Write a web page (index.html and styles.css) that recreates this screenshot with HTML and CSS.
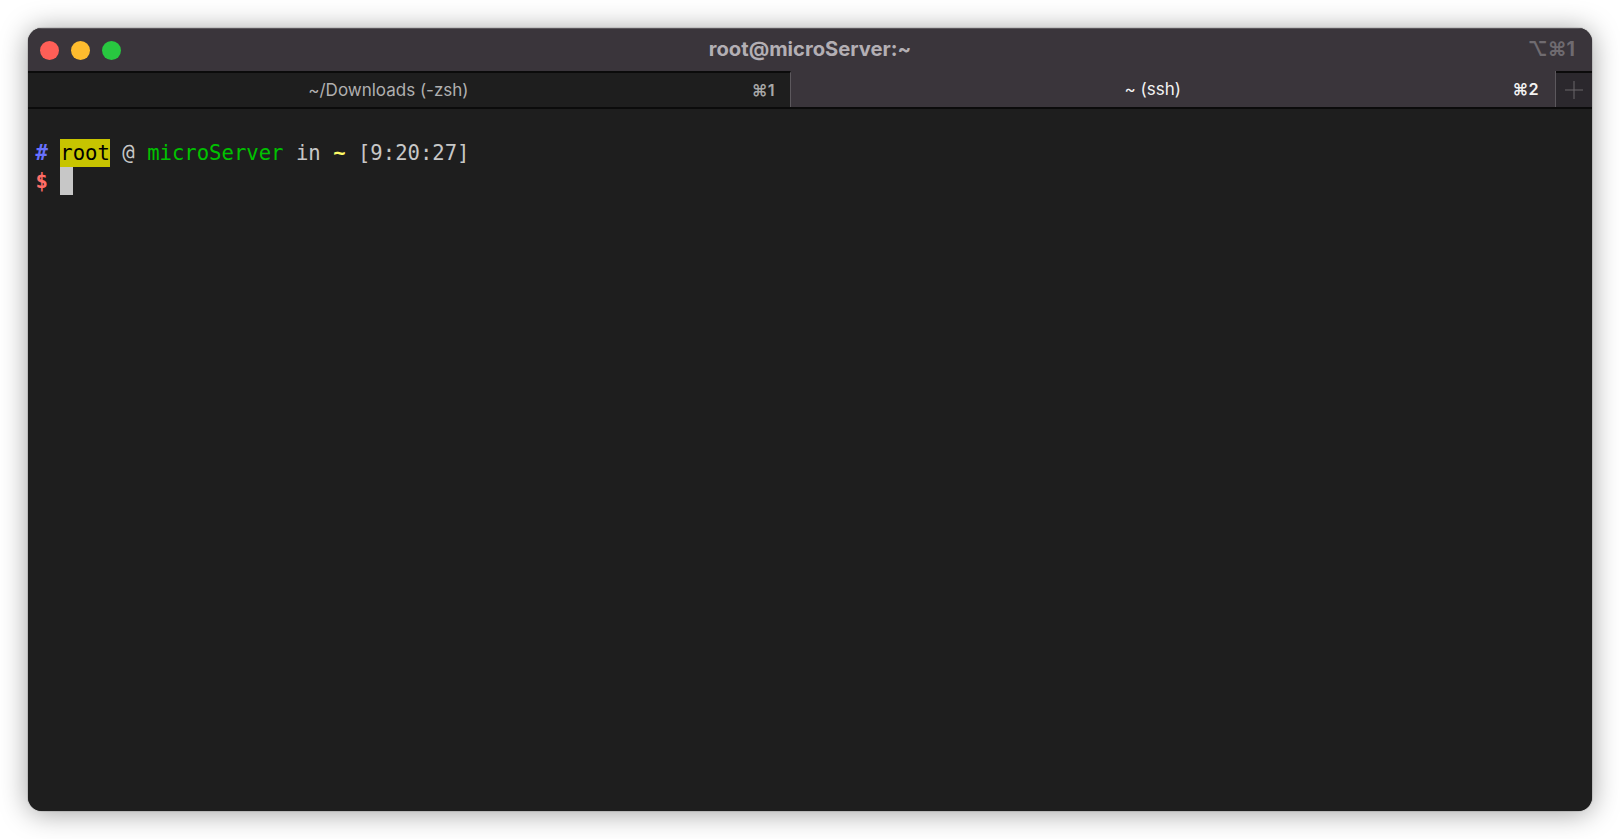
FILE: index.html
```html
<!DOCTYPE html>
<html lang="en">
<head>
<meta charset="utf-8">
<title>root@microServer:~</title>
<link rel="stylesheet" href="styles.css">
</head>
<body>
<main class="window">
  <header class="titlebar">
    <div class="lights">
      <span class="light red"></span>
      <span class="light yellow"></span>
      <span class="light green"></span>
    </div>
    <div class="title">root@microServer:~</div>
    <div class="title-shortcut">⌥⌘1</div>
  </header>
  <nav class="tabs">
    <div class="tab inactive">
      <span class="tab-label">~/Downloads (-zsh)</span>
      <span class="tab-key">⌘1</span>
    </div>
    <div class="tab active">
      <span class="tab-label">~ (ssh)</span>
      <span class="tab-key">⌘2</span>
    </div>
    <div class="new-tab">
      <svg class="plus" width="18" height="18" viewBox="0 0 18 18"><path d="M9 0V18M0 9H18"/></svg>
    </div>
  </nav>
  <section class="terminal">
    <div class="line"><span class="blue">#</span> <span class="hl">root</span> @ <span class="grn">microServer</span> in <span class="yel">~</span> [9:20:27]</div>
    <div class="line"><span class="red-t">$</span> <span class="cursor"> </span></div>
  </section>
</main>
</body>
</html>
```
FILE: styles.css
```css
* { box-sizing: border-box; }
html, body { margin: 0; height: 100%; background: #fff; overflow: hidden; }
body { padding: 28px; }
.window {
  width: 1564px;
  height: 783px;
  border-radius: 14px;
  overflow: hidden;
  display: flex;
  flex-direction: column;
  background: #1e1e1e;
  font-family: "Inter", "Liberation Sans", sans-serif;
  box-shadow: 0 0 0 1px rgba(0,0,0,.1), 0 2px 28px rgba(0,0,0,.38);
}
.titlebar {
  height: 43px;
  flex: none;
  background: #3a353b;
  border-top: 1px solid #5a565b;
  display: flex;
  align-items: center;
  padding: 0 17px 2px 12px;
  position: relative;
}
.lights { display: flex; gap: 12px; padding-top: 2px; }
.light { width: 19px; height: 19px; border-radius: 50%; display: block; }
.red { background: #ff5f57; }
.yellow { background: #febc2e; }
.green { background: #28c840; }
.title {
  position: absolute;
  left: 0; right: 0; top: 0; bottom: 3px;
  display: flex; align-items: center; justify-content: center;
  font-size: 20.2px;
  font-weight: 700;
  color: #b3afb4;
}
.title-shortcut {
  margin-left: auto;
  font-size: 19.5px;
  font-weight: 700;
  color: #6f6b70;
}
.tabs { height: 38px; flex: none; display: flex; border-bottom: 2px solid #0b0b0b; }
.tab { display: flex; align-items: center; position: relative; font-size: 17px; }
.inactive {
  width: 763px;
  background: #1e1e1e;
  border-top: 2px solid #0b0b0b;
  border-right: 1px solid #5c585d;
  color: #b0b0b0;
  padding: 0 15.5px 0 0;
}
.active {
  width: 765px;
  background: #3a353b;
  color: #f2f2f2;
  border-right: 1px solid #5c585d;
  padding: 0 16.5px 0 0;
}
.tab-label { flex: 1; text-align: center; }
.inactive .tab-label { padding-right: 3px; }
.active .tab-label { padding-left: 2px; }
.tab-key { font-size: 16.2px; font-weight: 600; }
.inactive .tab-key { color: #a8a8a8; }
.new-tab {
  flex: 1;
  background: #2b282d;
  border-top: 2px solid #0b0b0b;
  display: flex; align-items: center; justify-content: center;
}
.plus path { stroke: #6a676b; stroke-width: 1; fill: none; }
.terminal {
  flex: 1;
  padding: 30px 8px 0 7.5px;
  font-family: "DejaVu Sans Mono", monospace;
  font-size: 20.6px;
  color: #c7c7c7;
  background: #1e1e1e;
}
.line { height: 28px; line-height: 28px; white-space: pre; }
.hl { background: #c7c400; color: #000; display: inline-block; height: 28px; }
.blue { color: #6871ff; font-weight: 700; }
.red-t { color: #ff6d67; font-weight: 700; }
.grn { color: #00c200; }
.yel { color: #fefb67; font-weight: 700; }
.cursor { background: #c7c7c7; display: inline-block; height: 28px; }
```
